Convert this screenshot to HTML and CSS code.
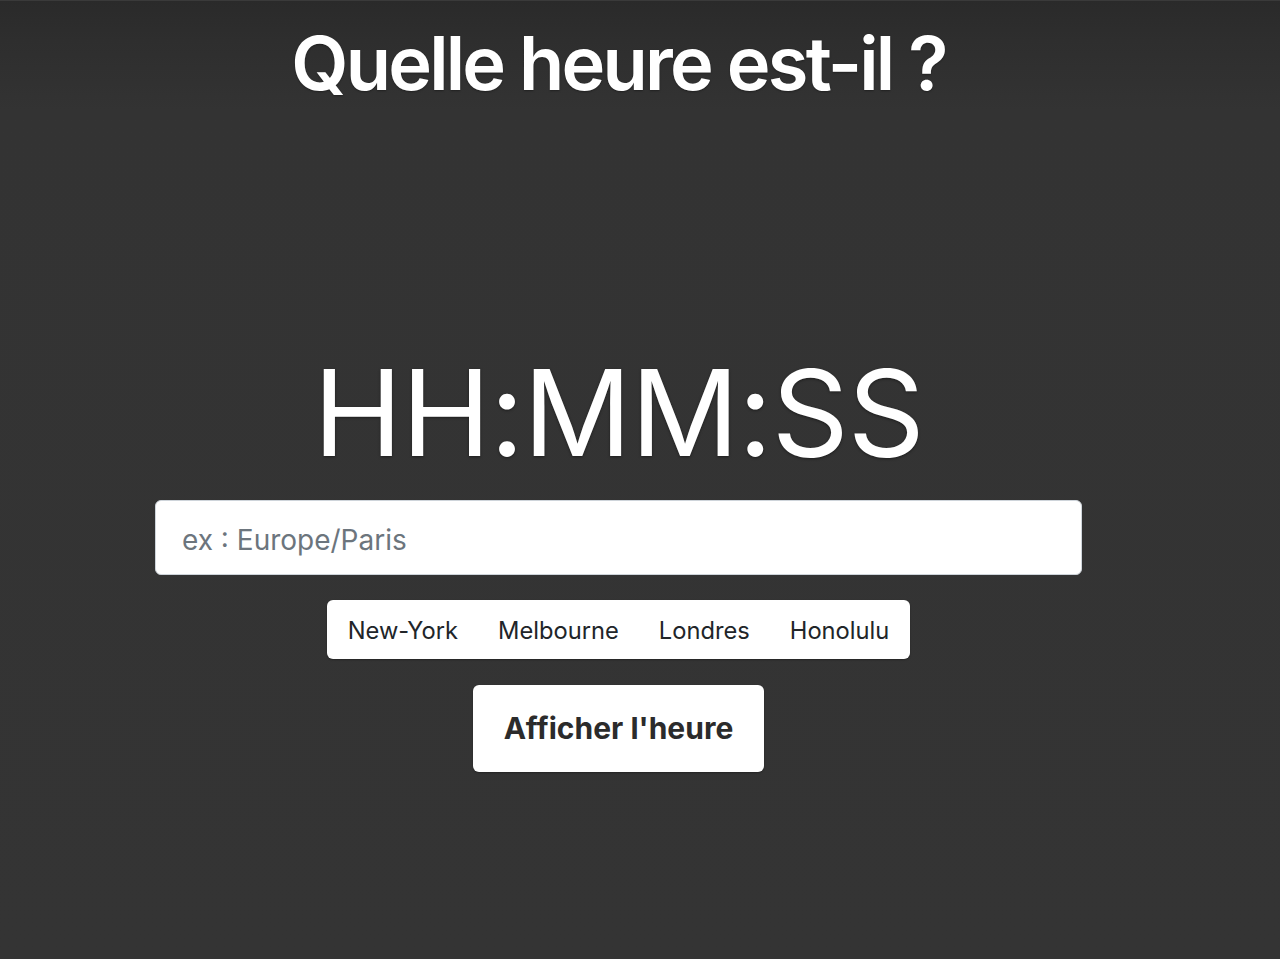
FILE: index.html
```html
<!DOCTYPE html>
<html lang="fr">
<head>
<meta charset="utf-8">
<title>Quelle heure est-il ?</title>
<link rel="stylesheet" href="styles.css">
</head>
<body>
<main class="app">
  <h1 class="title">Quelle heure est-il ?</h1>
  <div class="clock">HH:MM:SS</div>
  <input class="tz-input" type="text" placeholder="ex : Europe/Paris">
  <div class="cities">
    <button class="city">New-York</button>
    <button class="city">Melbourne</button>
    <button class="city">Londres</button>
    <button class="city">Honolulu</button>
  </div>
  <button class="show-btn">Afficher l'heure</button>
</main>
</body>
</html>
```

FILE: styles.css
```css
html, body {
  margin: 0;
  padding: 0;
  height: 100%;
}
body {
  background: linear-gradient(#2a2a2a 0, #2e2e2e 40px, #333333 110px, #343434 100%);
  border-top: 1px solid #3a3a3a;
  box-sizing: border-box;
  font-family: Inter, "Liberation Sans", Arial, sans-serif;
  color: #ffffff;
  overflow: hidden;
}
.app {
  width: 927px;
  margin-left: 155px;
  display: flex;
  flex-direction: column;
  align-items: center;
}
.title {
  margin: 18px 0 0 0;
  font-size: 74px;
  line-height: 1.2;
  font-weight: 600;
  letter-spacing: -2.8px;
  text-shadow: 0 1px 2px rgba(0,0,0,0.35);
}
.clock {
  margin-top: 233px;
  font-size: 120px;
  line-height: 1.2;
  font-weight: 400;
  letter-spacing: -1px;
  text-shadow: 0 1px 3px rgba(0,0,0,0.45);
}
.tz-input {
  margin-top: 15px;
  width: 100%;
  height: 75px;
  box-sizing: border-box;
  border: 1px solid #ced4da;
  border-radius: 6px;
  background: #ffffff;
  padding: 6px 26px 0;
  font-family: inherit;
  font-size: 28px;
  color: #495057;
  outline: none;
}
.tz-input::placeholder {
  color: #6c757d;
}
.cities {
  margin-top: 25px;
  display: flex;
  background: #ffffff;
  border-radius: 6px;
  padding: 0 1px;
  height: 59px;
  box-shadow: 0 1px 2px rgba(0,0,0,0.3);
}
.city {
  border: none;
  background: transparent;
  font-family: inherit;
  font-size: 23.7px;
  color: #212529;
  padding: 2px 20px 0;
  cursor: pointer;
}
.show-btn {
  margin-top: 26px;
  height: 87px;
  width: 291px;
  border: none;
  border-radius: 6px;
  background: #ffffff;
  font-family: inherit;
  font-size: 30px;
  font-weight: 700;
  color: #2b2b2b;
  box-shadow: 0 1px 2px rgba(0,0,0,0.3);
  cursor: pointer;
}
```
